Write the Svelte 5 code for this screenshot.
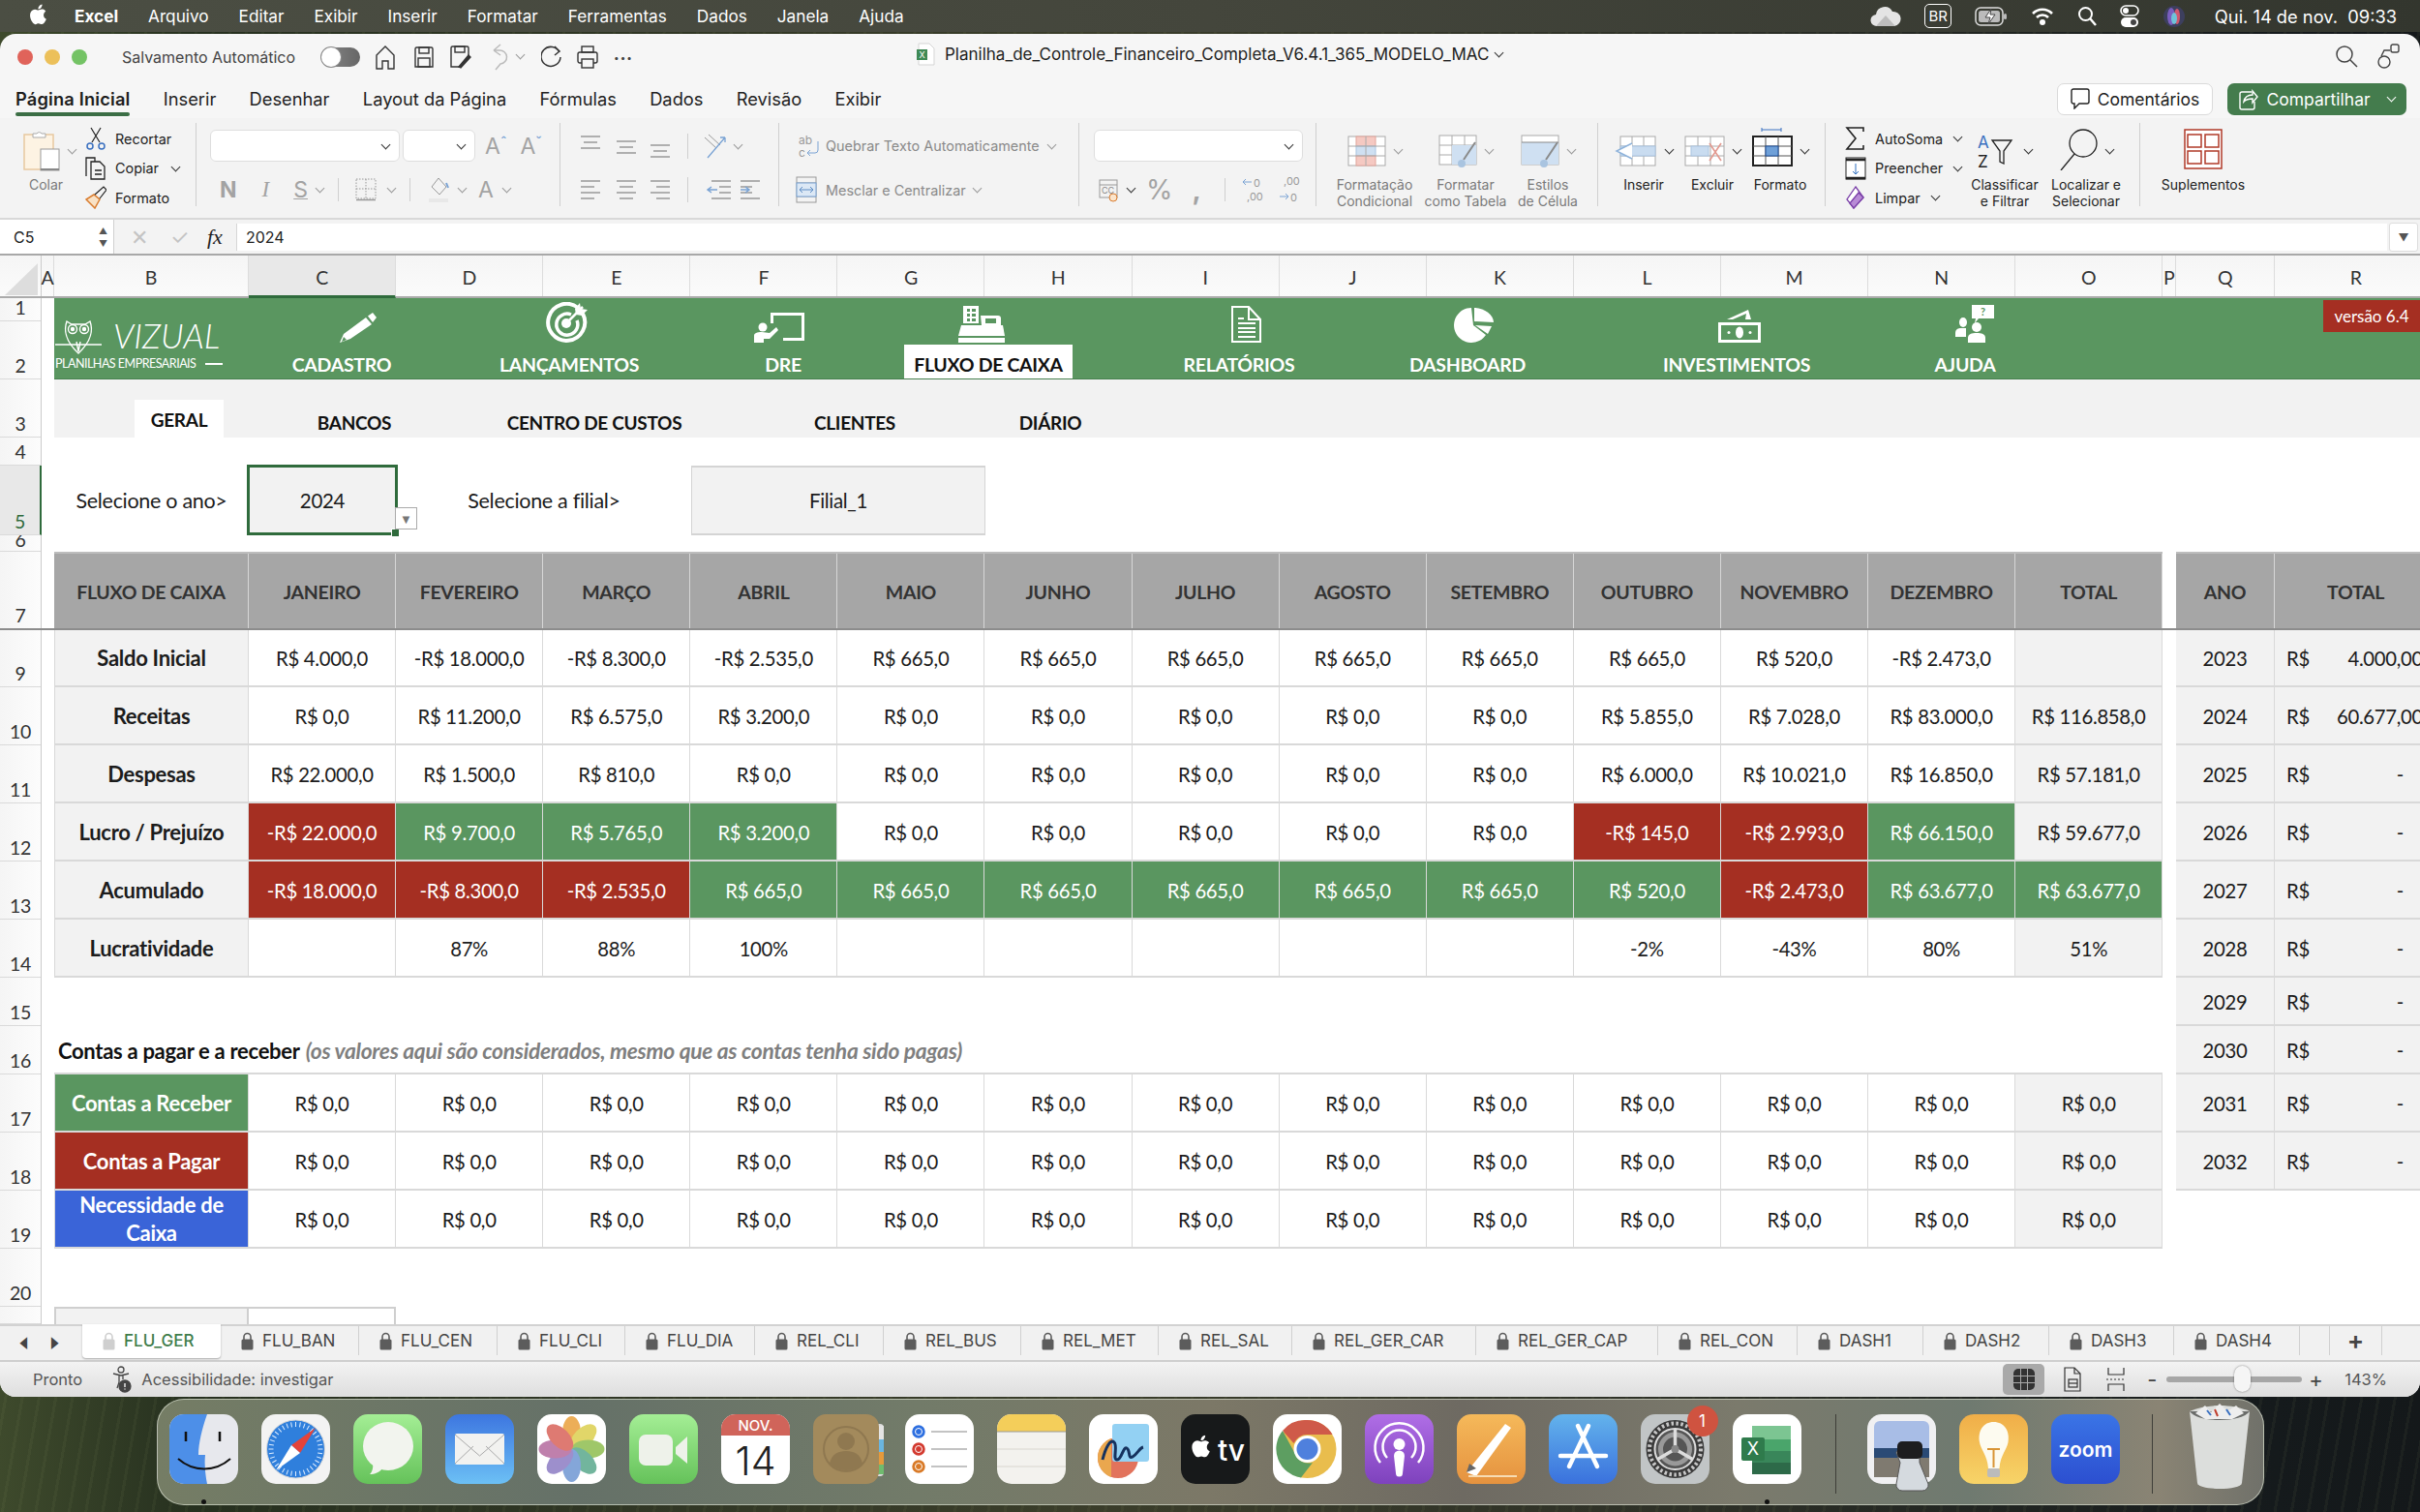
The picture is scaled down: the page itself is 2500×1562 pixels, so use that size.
<script>
  const menus = ['Arquivo', 'Editar', 'Exibir', 'Inserir', 'Formatar', 'Ferramentas', 'Dados', 'Janela', 'Ajuda']
  const ribbonTabs = ['Inserir', 'Desenhar', 'Layout da Página', 'Fórmulas', 'Dados', 'Revisão', 'Exibir']
  const letters = ['B', 'C', 'D', 'E', 'F', 'G', 'H', 'I', 'J', 'K', 'L', 'M', 'N', 'O', 'P', 'Q', 'R']
  const months = ['JANEIRO', 'FEVEREIRO', 'MARÇO', 'ABRIL', 'MAIO', 'JUNHO', 'JULHO', 'AGOSTO', 'SETEMBRO', 'OUTUBRO', 'NOVEMBRO', 'DEZEMBRO', 'TOTAL']

  const rowHeads = [
    ['1', 24], ['2', 60], ['3', 60], ['4', 29], ['5', 72], ['6', 17], ['7', 80],
    ['9', 60], ['10', 60], ['11', 60], ['12', 60], ['13', 60], ['14', 60],
    ['15', 50], ['16', 50], ['17', 60], ['18', 60], ['19', 60], ['20', 60], ['', 18],
  ]

  const zero = 'R$ 0,0'
  const five = [zero, zero, zero, zero, zero]
  const rows = [
    { label: 'Saldo Inicial', cells: ['R$ 4.000,0', '-R$ 18.000,0', '-R$ 8.300,0', '-R$ 2.535,0', 'R$ 665,0', 'R$ 665,0', 'R$ 665,0', 'R$ 665,0', 'R$ 665,0', 'R$ 665,0', 'R$ 520,0', '-R$ 2.473,0', ''] },
    { label: 'Receitas', cells: [zero, 'R$ 11.200,0', 'R$ 6.575,0', 'R$ 3.200,0', ...five, 'R$ 5.855,0', 'R$ 7.028,0', 'R$ 83.000,0', 'R$ 116.858,0'] },
    { label: 'Despesas', cells: ['R$ 22.000,0', 'R$ 1.500,0', 'R$ 810,0', zero, ...five, 'R$ 6.000,0', 'R$ 10.021,0', 'R$ 16.850,0', 'R$ 57.181,0'] },
    { label: 'Lucro / Prejuízo', tone: 'rgggnnnnnrrgn', cells: ['-R$ 22.000,0', 'R$ 9.700,0', 'R$ 5.765,0', 'R$ 3.200,0', ...five, '-R$ 145,0', '-R$ 2.993,0', 'R$ 66.150,0', 'R$ 59.677,0'] },
    { label: 'Acumulado', tone: 'rrrgggggggrgg', cells: ['-R$ 18.000,0', '-R$ 8.300,0', '-R$ 2.535,0', 'R$ 665,0', 'R$ 665,0', 'R$ 665,0', 'R$ 665,0', 'R$ 665,0', 'R$ 665,0', 'R$ 520,0', '-R$ 2.473,0', 'R$ 63.677,0', 'R$ 63.677,0'] },
    { label: 'Lucratividade', cells: ['', '87%', '88%', '100%', '', '', '', '', '', '-2%', '-43%', '80%', '51%'] },
  ]
  const zeros = Array(13).fill(zero)
  const payables = [
    { label: 'Contas a Receber', cls: 'bg-g' },
    { label: 'Contas a Pagar', cls: 'bg-r' },
    { label: 'Necessidade de Caixa', cls: 'bg-b' },
  ]
  const years = [
    ['2023', '4.000,00', 60], ['2024', '60.677,00', 60], ['2025', '-', 60], ['2026', '-', 60], ['2027', '-', 60],
    ['2028', '-', 60], ['2029', '-', 50], ['2030', '-', 50], ['2031', '-', 60], ['2032', '-', 60],
  ]
  const sheets = [
    ['FLU_GER', 143], ['FLU_BAN', 143], ['FLU_CEN', 143], ['FLU_CLI', 132], ['FLU_DIA', 134], ['REL_CLI', 133], ['REL_BUS', 142], ['REL_MET', 142],
    ['REL_SAL', 138], ['REL_GER_CAR', 190], ['REL_GER_CAP', 188], ['REL_CON', 144], ['DASH1', 130], ['DASH2', 130], ['DASH3', 129], ['DASH4', 130],
  ]
  const apple = 'M17.05 12.54c-.03-2.6 2.12-3.85 2.22-3.91-1.21-1.77-3.09-2.01-3.76-2.04-1.6-.16-3.12.94-3.93.94-.81 0-2.06-.92-3.39-.9-1.74.03-3.35 1.01-4.25 2.57-1.81 3.14-.46 7.8 1.3 10.35.86 1.25 1.89 2.65 3.24 2.6 1.3-.05 1.79-.84 3.36-.84 1.57 0 2.01.84 3.39.81 1.4-.02 2.28-1.27 3.14-2.53.99-1.45 1.4-2.85 1.42-2.93-.03-.01-2.72-1.04-2.74-4.12zM14.47 4.9c.72-.87 1.2-2.08 1.07-3.28-1.03.04-2.28.69-3.02 1.55-.66.77-1.24 2-1.09 3.18 1.15.09 2.32-.58 3.04-1.45z'
  const petals = [
    ['#e9a13b', 0], ['#dcd04f', 45], ['#8fbe4f', 90], ['#5aa98c', 135], ['#6f97d3', 180], ['#8c7cc4', 225], ['#b56a9e', 270], ['#d9635a', 315],
  ]
  const ticks = Array.from({ length: 36 }, (_, i) => i * 10)
</script>

{#snippet lock(color)}
  <svg class="lock" viewBox="0 0 13 20" style:fill={color} style:stroke={color}><path d="M3 9V6a3.5 3.5 0 0 1 7 0v3" fill="none" stroke-width="1.6" /><rect x="0.5" y="8.5" width="12" height="11" rx="1.6" stroke="none" /></svg>
{/snippet}

{#snippet xlfile(size)}
  <svg width={size} height={size} viewBox="0 0 20 24"><path d="M2 1h11l5 5v17H2z" fill="#fff" stroke="#d5d5d5" /><rect x="0" y="7" width="11" height="11" fill="#3f8a55" /><text x="5.5" y="15.6" font-size="9" text-anchor="middle" fill="#fff" font-family="Inter, sans-serif">X</text></svg>
{/snippet}

<div class="desktop">
  <header class="menubar">
    <svg class="apple" viewBox="0 0 24 24"><path d={apple} fill="#fff" /></svg>
    <b>Excel</b>
    {#each menus as m}<span>{m}</span>{/each}
    <div class="tray">
      <svg width="32" height="26" viewBox="0 0 32 26"><path d="M7 23a6 6 0 0 1-1-12 9 9 0 0 1 17-3 7.5 7.5 0 0 1 2 15z" fill="#e4e4e4" /><path d="M6 23l10-11 10 11z" fill="#bdbdbd" /></svg>
      <span class="br">BR</span>
      <svg width="34" height="20" viewBox="0 0 34 20"><rect x="1" y="1" width="28" height="18" rx="5" fill="none" stroke="#ddd" stroke-width="1.5" /><rect x="4" y="4" width="22" height="12" rx="2.5" fill="#bbb" /><rect x="30" y="7" width="3" height="6" rx="1.5" fill="#bbb" /><path d="M17 2l-6 9h5l-2 7 7-10h-5z" fill="#fff" stroke="#444" stroke-width="1" /></svg>
      <svg width="24" height="20" viewBox="0 0 24 20"><path d="M2 7a14 14 0 0 1 20 0M6 11a8.5 8.5 0 0 1 12 0" fill="none" stroke="#fff" stroke-width="2.6" /><circle cx="12" cy="16" r="3" fill="#fff" /></svg>
      <svg width="20" height="22" viewBox="0 0 20 22"><circle cx="8.5" cy="8.5" r="6.5" fill="none" stroke="#fff" stroke-width="2" /><path d="M13 13l6 7" stroke="#fff" stroke-width="2.4" /></svg>
      <svg width="20" height="24" viewBox="0 0 20 24"><rect x="1" y="1" width="18" height="10" rx="5" fill="none" stroke="#fff" stroke-width="1.6" /><circle cx="6" cy="6" r="3" fill="#fff" /><rect x="1" y="13" width="18" height="10" rx="5" fill="#fff" /><circle cx="14" cy="18" r="3" fill="#444" /></svg>
      <svg width="24" height="24" viewBox="0 0 24 24"><circle cx="12" cy="12" r="11" fill="#3d3f5e" /><ellipse cx="9" cy="12" rx="4" ry="9" fill="#7a5fc0" /><ellipse cx="15" cy="12" rx="3" ry="8" fill="#d0586e" /><ellipse cx="12" cy="14" rx="3" ry="6" fill="#6fc3d8" /></svg>
      <span class="date">Qui. 14 de nov.&nbsp; 09:33</span>
    </div>
  </header>

  <main class="window">
    <div class="titlebar">
      <i class="light red"></i><i class="light yel"></i><i class="light grn"></i>
      <span class="autosave">Salvamento Automático</span>
      <span class="toggle"><i></i></span>
      <svg class="tb" width="22" height="26" viewBox="0 0 22 26" fill="none" stroke="#333" stroke-width="1.4"><path d="M2 25V11l9-9 9 9v14h-6v-8H8v8z" /></svg>
      <svg class="tb" style="margin-left:4px" width="20" height="22" viewBox="0 0 20 22" fill="none" stroke="#333" stroke-width="1.4"><path d="M1 2.5A1.5 1.5 0 0 1 2.5 1h15A1.5 1.5 0 0 1 19 2.5V21H1z" /><rect x="5" y="1" width="10" height="6" /><rect x="4" y="12" width="12" height="9" /></svg>
      <svg class="tb" style="margin-left:2px" width="22" height="24" viewBox="0 0 22 24" fill="none" stroke="#333" stroke-width="1.4"><path d="M1 2.5A1.5 1.5 0 0 1 2.5 1h15A1.5 1.5 0 0 1 19 2.5V12l-8 10H1z" /><rect x="5" y="1" width="10" height="6" /><path d="M9 22l10-12 2 2-10 11z" fill="#333" /></svg>
      <svg class="tb" style="margin-left:1px" width="22" height="30" viewBox="0 0 22 30" fill="none" stroke="#bbb" stroke-width="1.5"><path d="M7 8l7-6M7 8l7 5M7 8h6a7 7 0 0 1 1 14l-5 6" /></svg>
      <i class="chev soft" style="margin:-4px 0 0 -6px"></i>
      <svg class="tb" style="margin-left:3px" width="22" height="24" viewBox="0 0 22 24" fill="none" stroke="#333" stroke-width="1.5"><path d="M19 7A10 10 0 1 0 20 12M14 1l5 5-5 4" /></svg>
      <svg class="tb" width="22" height="24" viewBox="0 0 22 24" fill="none" stroke="#333" stroke-width="1.4"><rect x="5" y="1" width="12" height="6" /><rect x="1" y="7" width="20" height="11" rx="2" /><rect x="5" y="14" width="12" height="9" fill="#f6f6f6" /></svg>
      <span class="more">•••</span>
      <div class="doctitle">
        {@render xlfile(24)}
        <span>Planilha_de_Controle_Financeiro_Completa_V6.4.1_365_MODELO_MAC</span>
        <i class="chev"></i>
      </div>
      <svg class="right-a" width="24" height="24" viewBox="0 0 24 24" fill="none" stroke="#444" stroke-width="1.5"><circle cx="10" cy="10" r="8" /><path d="M16 16l7 7" /></svg>
      <svg class="right-b" width="24" height="26" viewBox="0 0 24 26" fill="none" stroke="#444" stroke-width="1.4"><circle cx="7" cy="19" r="6" /><rect x="14" y="1" width="8" height="8" rx="2" /><path d="M4 13l3-6h6" /></svg>
    </div>

    <nav class="tabs">
      <span class="on">Página Inicial</span>
      {#each ribbonTabs as t}<span>{t}</span>{/each}
      <div class="actions">
        <button class="comments"><svg width="20" height="22" viewBox="0 0 20 22" fill="#fff" stroke="#222" stroke-width="1.4"><path d="M3 1h14a2 2 0 0 1 2 2v11a2 2 0 0 1-2 2H9l-5 5v-5H3a2 2 0 0 1-2-2V3a2 2 0 0 1 2-2z" /></svg>Comentários</button>
        <button class="share"><svg width="20" height="24" viewBox="0 0 20 24" fill="none" stroke="#fff" stroke-width="1.4"><path d="M13 5H3a2 2 0 0 0-2 2v14a2 2 0 0 0 2 2h11a2 2 0 0 0 2-2v-6" /><path d="M5 15c1-5 4-7 9-7V4l5 6-5 6v-4c-4 0-7 1-9 3z" /></svg>Compartilhar<i class="chev wh"></i></button>
      </div>
    </nav>

    <section class="ribbon">
      <div class="grp g1">
        <div class="big colar">
          <div class="ico">
            <svg width="38" height="42" viewBox="0 0 38 42"><rect x="1" y="4" width="30" height="36" fill="#fdf3e3" stroke="#e8c9a0" stroke-width="1.5" /><path d="M10 7V3h4a3 3 0 0 1 5 0h4v4z" fill="#fff" stroke="#aaa" /><rect x="18" y="19" width="19" height="22" fill="#fff" stroke="#999" /><path d="M18 40h19" stroke="#888" stroke-width="2" /></svg>
            <i class="chev soft"></i>
          </div>
          <span class="lbl grey">Colar</span>
        </div>
        <div class="stack">
          <div class="it"><svg width="22" height="24" viewBox="0 0 22 24" fill="none" stroke="#222" stroke-width="1.2"><path d="M6 1l9 15M16 1L7 16" /><circle cx="5" cy="20" r="3" stroke="#3a70c0" stroke-width="1.5" /><circle cx="17" cy="20" r="3" stroke="#3a70c0" stroke-width="1.5" /></svg>Recortar</div>
          <div class="it"><svg width="22" height="24" viewBox="0 0 22 24" fill="#f3f3f3" stroke="#222" stroke-width="1.3"><path d="M1 20V1h9v4" /><path d="M6 5h9l5 5v13H6z" /><path d="M10 14h7M10 18h7" /></svg>Copiar<i class="chev" style="margin-left:5px"></i></div>
          <div class="it"><svg width="22" height="24" viewBox="0 0 22 24" fill="none" stroke="#d97c2e" stroke-width="1.5"><path d="M1 14l9 9 5-9-6-5z" fill="#f9e2c6" /><path d="M10 9l9-8 3 3-7 9" stroke="#222" stroke-width="1.2" /></svg>Formato</div>
        </div>
      </div>

      <div class="grp g2">
        <div class="line">
          <div class="box" style="width:196px"><i class="chev"></i></div>
          <div class="box" style="width:75px;margin-left:3px"><i class="chev"></i></div>
          <span class="gl a1">A<small>ˆ</small></span>
          <span class="gl a2">A<small>ˇ</small></span>
        </div>
        <div class="line low">
          <b class="gl" style="margin-left:10px">N</b>
          <i class="gl serif" style="margin-left:26px">I</i>
          <u class="gl" style="margin-left:25px">S</u>
          <i class="chev soft" style="margin-left:9px"></i>
          <i class="vsep" style="margin-left:15px"></i>
          <svg style="margin-left:17px" width="22" height="24" viewBox="0 0 22 24" fill="none" stroke="#999"><rect x="1" y="1" width="20" height="20" stroke-dasharray="1.5 1.5" /><path d="M11 1v20M1 11h20" stroke-dasharray="1.5 1.5" /><path d="M1 22.5h20" stroke-width="1.5" /></svg>
          <i class="chev soft" style="margin-left:12px"></i>
          <i class="vsep" style="margin-left:15px"></i>
          <svg style="margin-left:19px" width="22" height="26" viewBox="0 0 22 26" fill="none" stroke="#999"><path d="M10 1l8 9-7 8-8-8z" /><path d="M18 6l2 5" stroke="#7aa3d4" stroke-width="2" /><rect y="22" width="20" height="4" fill="#e8e8e8" stroke="none" /></svg>
          <i class="chev soft" style="margin-left:9px"></i>
          <span class="gl u-bar" style="margin-left:13px">A</span>
          <i class="chev soft" style="margin-left:10px"></i>
        </div>
      </div>

      <div class="grp g3">
        <div class="line">
          <svg class="al" width="92" height="24" viewBox="0 0 92 24" stroke="#999" stroke-width="1.6"><path d="M0 2h20M3 8h14M0 14h20M37 7h20M40 13h14M37 19h20M72 11h20M75 17h14M72 23h20" /></svg>
          <i class="vsep tall" style="margin-left:18px"></i>
          <svg style="margin-left:16px" width="24" height="26" viewBox="0 0 24 26" fill="none" stroke="#999"><path d="M1 4l12 11M5 1l12 11" /><path d="M4 25L22 4M22 4h-5M22 4v5" stroke="#7aa3d4" stroke-width="1.3" /></svg>
          <i class="chev soft" style="margin-left:8px"></i>
        </div>
        <div class="line low">
          <svg class="al" width="92" height="22" viewBox="0 0 92 22" stroke="#999" stroke-width="1.6"><path d="M0 2h20M0 8h14M0 14h20M0 20h14M37 2h20M40 8h14M37 14h20M40 20h14M72 2h20M78 8h14M72 14h20M78 20h14" /></svg>
          <i class="vsep tall" style="margin-left:18px"></i>
          <svg style="margin-left:18px" width="58" height="22" viewBox="0 0 58 22" fill="none" stroke="#999" stroke-width="1.5"><path d="M6 2h20M14 8h12M14 14h12M6 20h20M36 2h20M36 8h12M36 14h12M36 20h20" /><path d="M12 11H2M6 8l-4 3 4 3M36 11h8M41 8l4 3-4 3" stroke="#7aa3d4" /></svg>
        </div>
      </div>

      <div class="grp g4">
        <div class="line">
          <svg style="margin-left:20px" width="22" height="26" viewBox="0 0 22 26" fill="none" stroke="#999"><text x="0" y="11" font-size="12" fill="#999" stroke="none" font-family="Inter, sans-serif">ab</text><text x="0" y="24" font-size="12" fill="#999" stroke="none" font-family="Inter, sans-serif">c</text><path d="M20 8v9a3 3 0 0 1-3 3h-7M12 17l-3 3 3 3" stroke="#7aa3d4" /></svg>
          <span class="dim" style="margin-left:6px">Quebrar Texto Automaticamente</span>
          <i class="chev soft" style="margin-left:9px"></i>
        </div>
        <div class="line low">
          <svg style="margin-left:17px" width="22" height="28" viewBox="0 0 22 28" fill="none" stroke="#999"><rect x="1" y="1" width="20" height="26" /><path d="M1 7h20M1 21h20" /><rect x="1" y="7" width="20" height="14" fill="#dce8f5" stroke="#7aa3d4" /><path d="M4 14h14M4 14l3-3M4 14l3 3M18 14l-3-3M18 14l-3 3" stroke="#5d8cc4" /></svg>
          <span class="dim" style="margin-left:9px">Mesclar e Centralizar</span>
          <i class="chev soft" style="margin-left:8px"></i>
        </div>
      </div>

      <div class="grp g5">
        <div class="line">
          <div class="box" style="width:216px;margin-left:15px"><i class="chev"></i></div>
        </div>
        <div class="line low">
          <svg style="margin-left:20px" width="22" height="26" viewBox="0 0 22 26" fill="none" stroke="#999"><rect x="1" y="3" width="18" height="18" /><path d="M1 8h18" /><text x="3" y="17" font-size="9" fill="#888" stroke="none" font-family="Inter, sans-serif">CC</text><circle cx="15" cy="21" r="4" fill="#fbe5cc" stroke="#d97c2e" /></svg>
          <i class="chev" style="margin-left:8px"></i>
          <span class="gl pct" style="margin-left:12px">%</span>
          <span class="gl pct" style="margin-left:20px;font-weight:700">,</span>
          <i class="vsep" style="margin-left:24px"></i>
          <svg style="margin-left:17px" width="22" height="32" viewBox="0 0 22 32" fill="none" stroke="#7aa3d4"><path d="M10 8H1M4 5L1 8l3 3" /><text x="12" y="13" font-size="11" fill="#999" stroke="none" font-family="Inter, sans-serif">0</text><text x="5" y="27" font-size="11" fill="#999" stroke="none" font-family="Inter, sans-serif">,00</text></svg>
          <svg style="margin-left:16px" width="22" height="32" viewBox="0 0 22 32" fill="none" stroke="#7aa3d4"><text x="5" y="11" font-size="11" fill="#999" stroke="none" font-family="Inter, sans-serif">,00</text><path d="M1 23h9M7 20l3 3-3 3" /><text x="12" y="28" font-size="11" fill="#999" stroke="none" font-family="Inter, sans-serif">0</text></svg>
        </div>
      </div>

      <div class="grp g6">
        <div class="big" style="width:84px;margin-left:18px">
          <div class="ico"><svg width="40" height="32" viewBox="0 0 40 32" fill="#fff" stroke="#aaa"><rect x="1" y="1" width="38" height="30" /><rect x="9" y="1" width="20" height="10" fill="#f5c9c2" stroke="#e0a59c" /><rect x="9" y="11" width="20" height="10" fill="#cfe0f2" stroke="#a9c4e0" /><rect x="9" y="21" width="20" height="10" fill="#f5c9c2" stroke="#e0a59c" /><path d="M19 1v30M1 11h38M1 21h38" /></svg><i class="chev soft"></i></div>
          <span class="lbl grey">Formatação<br />Condicional</span>
        </div>
        <div class="big" style="width:104px">
          <div class="ico"><svg width="40" height="34" viewBox="0 0 40 34" fill="#fff" stroke="#aaa"><rect x="1" y="1" width="38" height="30" /><path d="M14 1v30M27 1v30M1 11h38M1 21h38" /><rect x="14" y="11" width="25" height="20" fill="#cfe0f2" stroke="none" /><path d="M38 8L26 26" stroke="#8a8a8a" stroke-width="2" /><ellipse cx="24" cy="30" rx="4" ry="4" fill="#a9c4e0" stroke="none" /></svg><i class="chev soft"></i></div>
          <span class="lbl grey">Formatar<br />como Tabela</span>
        </div>
        <div class="big" style="width:66px">
          <div class="ico"><svg width="40" height="34" viewBox="0 0 40 34" fill="#fff" stroke="#aaa"><rect x="1" y="1" width="38" height="30" /><rect x="1" y="8" width="38" height="23" fill="#cfe0f2" stroke="none" /><path d="M1 8h38" stroke="#888" /><path d="M38 8L26 26" stroke="#8a8a8a" stroke-width="2" /><ellipse cx="24" cy="30" rx="4" ry="4" fill="#a9c4e0" stroke="none" /></svg><i class="chev soft"></i></div>
          <span class="lbl grey">Estilos<br />de Célula</span>
        </div>
      </div>

      <div class="grp g7">
        <div class="big" style="width:72px;margin-left:11px">
          <div class="ico"><svg width="44" height="32" viewBox="0 0 44 32" fill="#fff" stroke="#aaa"><rect x="6" y="1" width="36" height="30" /><path d="M18 1v30M30 1v30M6 11h36M6 21h36" /><rect x="6" y="11" width="36" height="10" fill="#c9dcf0" stroke="#a9c4e0" /><path d="M18 8L2 16l16 8" fill="#fff" stroke="#8fb3da" stroke-width="1.5" /></svg><i class="chev"></i></div>
          <span class="lbl">Inserir</span>
        </div>
        <div class="big" style="width:70px">
          <div class="ico"><svg width="42" height="32" viewBox="0 0 42 32" fill="#fff" stroke="#aaa"><rect x="1" y="1" width="40" height="30" /><path d="M14 1v30M27 1v30M1 11h40M1 21h40" /><rect x="7" y="11" width="18" height="10" fill="#c9dcf0" stroke="#a9c4e0" /><path d="M26 8l12 18M38 8L26 26" stroke="#e39a90" stroke-width="1.6" /></svg><i class="chev"></i></div>
          <span class="lbl">Excluir</span>
        </div>
        <div class="big" style="width:70px">
          <div class="ico"><svg width="42" height="40" viewBox="0 0 42 40" fill="#fff" stroke="#222" style="margin-top:-8px"><path d="M10 2h20M10 0v4M30 0v4" stroke="#3a70c0" /><rect x="1" y="9" width="40" height="30" stroke-width="2" /><path d="M14 9v30M27 9v30M1 19h40M1 29h40" stroke="#555" /><rect x="14" y="19" width="13" height="10" fill="#6fa0d8" stroke="#1f4f9a" /></svg><i class="chev"></i></div>
          <span class="lbl">Formato</span>
        </div>
      </div>

      <div class="grp g8">
        <div class="stack w">
          <div class="it"><svg width="22" height="24" viewBox="0 0 22 24" fill="none" stroke="#222" stroke-width="1.6"><path d="M19 5V1H2l9 11-9 11h17v-4" /></svg>AutoSoma<i class="chev" style="margin-left:3px"></i></div>
          <div class="it"><svg width="22" height="24" viewBox="0 0 22 24" fill="#fff" stroke="#222"><rect x="1" y="1" width="20" height="22" /><path d="M1 3h20M1 22h20" stroke-width="2.5" /><path d="M11 7v11M8 15l3 3 3-3" stroke="#2f6fbf" fill="none" /></svg>Preencher<i class="chev" style="margin-left:3px"></i></div>
          <div class="it"><svg width="22" height="24" viewBox="0 0 22 24" fill="#fff" stroke="#7a3fa8" stroke-width="1.3"><path d="M11 1l8 11-10 11-7-9z" /><path d="M5 18l9-11 5 5-10 11z" fill="#b88bd6" /></svg>Limpar<i class="chev" style="margin-left:3px"></i></div>
        </div>
        <div class="big" style="width:80px;margin-left:7px">
          <div class="ico"><svg width="40" height="38" viewBox="0 0 40 38" fill="none" stroke="#222"><text x="0" y="16" font-size="17" fill="#3a70c0" stroke="none" font-family="Inter, sans-serif">A</text><text x="0" y="36" font-size="17" fill="#222" stroke="none" font-family="Inter, sans-serif">Z</text><path d="M15 8h20l-8 11v13l-4-2V19z" stroke-width="1.3" /></svg><i class="chev"></i></div>
          <span class="lbl">Classificar<br />e Filtrar</span>
        </div>
        <div class="big" style="width:88px">
          <div class="ico"><svg width="40" height="44" viewBox="0 0 40 44" fill="none" stroke="#222" stroke-width="1.3" style="margin-top:-4px"><circle cx="25" cy="16" r="14" /><path d="M16 27L2 44" /></svg><i class="chev"></i></div>
          <span class="lbl">Localizar e<br />Selecionar</span>
        </div>
      </div>

      <div class="grp g9">
        <div class="big" style="width:130px">
          <div class="ico"><svg width="40" height="42" viewBox="0 0 40 42" fill="#fff" stroke="#b03a28" stroke-width="1.5" style="margin-top:-3px"><rect x="1" y="1" width="38" height="40" /><rect x="4" y="6" width="14" height="13" /><rect x="22" y="6" width="14" height="13" /><rect x="4" y="23" width="14" height="13" /><rect x="22" y="23" width="14" height="13" /></svg></div>
          <span class="lbl">Suplementos</span>
        </div>
      </div>
    </section>

    <div class="formula">
      <div class="namebox"><span>C5</span><em>▲<br />▼</em></div>
      <span class="fx x">✕</span><span class="fx c">✓</span><span class="fx f">fx</span>
      <div class="input">2024</div>
      <div class="expand">▼</div>
    </div>

    <section class="sheet">
      <div class="colhead">
        <div class="corner"><svg width="36" height="36" viewBox="0 0 36 36"><path d="M36 2v33H2z" fill="#ddd" /></svg></div>
        <div class="ch">A</div>
        {#each letters as l}<div class="ch" class:sel={l === 'C'}>{l}</div>{/each}
      </div>
      <div class="sheetbody">
        <div class="rowheads">
          {#each rowHeads as [n, h]}
            <div class="rh" class:sel={n === '5'} class:short={n === '6'} style:height="{h}px">{n}</div>
          {/each}
        </div>

        <div class="content">
          <div class="banner">
            <div class="logo">
              <div class="logo-top">
                <svg width="48" height="38" viewBox="0 0 48 38" fill="none" stroke="#fff" stroke-width="1.4"><path d="M12 3l5 3h14l5-3c3 8 2 20-12 33C10 23 9 11 12 3z" /><circle cx="18" cy="11" r="4.5" /><circle cx="30" cy="11" r="4.5" /><circle cx="18" cy="11" r="1.5" fill="#fff" /><circle cx="30" cy="11" r="1.5" fill="#fff" /><path d="M22 24l2 10 2-10M0 27h48" /></svg>
                <span class="vizual">VIZUAL</span>
              </div>
              <div class="logo-sub"><span>PLANILHAS EMPRESARIAIS</span><i></i></div>
            </div>

            <div class="nav" style="--dx:17px">
              <svg width="38" height="31" viewBox="0 0 38 31" fill="#fff"><path d="M0 31l4-9L27 5l6 7-22 15z" /><path d="M29 3.500l5-3.500 4 5-4 5z" /><path d="M2 30l2-5 3 3z" fill="#5a9660" /></svg>
              <span>CADASTRO</span>
            </div>
            <div class="nav" style="--dx:-2px">
              <svg width="44" height="42" viewBox="0 0 44 42" fill="none" stroke="#fff"><path d="M33 6A19 19 0 1 0 38 12" stroke-width="4" /><path d="M26 13a11 11 0 1 0 6 6" stroke-width="3.500" /><circle cx="21" cy="22" r="5" fill="#fff" stroke="none" /><path d="M21 22L38 5" stroke-width="2.500" /><path d="M35 1l1 6 7 1-6 6-6-1-1-6z" fill="#fff" stroke="none" /></svg>
              <span>LANÇAMENTOS</span>
            </div>
            <div class="nav" style="--dx:-3px">
              <svg width="54" height="32" viewBox="0 0 54 32" fill="#fff"><path d="M17 1h35v29H30v-3h19V4H20v8h-3z" /><circle cx="9" cy="16" r="4.500" /><path d="M0 32v-7c0-3 3-4 8-4l8 1 7-6 2 3-9 9H10v4z" /></svg>
              <span>DRE</span>
            </div>
            <div class="nav active" style="--dx:-7px">
              <svg width="48" height="38" viewBox="0 0 48 38" fill="#fff"><path d="M5 0h16v18H5z" /><path d="M9 3h3v3H9zM14 3h4v3h-4zM9 8h3v3H9zM14 8h4v3h-4zM9 13h3v3H9zM14 13h4v3h-4z" fill="#5a9660" /><path d="M23 10h18a3 3 0 0 1 3 3v7h-20z" /><rect x="28" y="13" width="11" height="5" fill="#5a9660" /><path d="M3 20h43l2 11H0z" /><rect y="33" width="48" height="5" /></svg>
              <span>FLUXO DE CAIXA</span>
            </div>
            <div class="nav" style="--dx:7px">
              <svg width="32" height="38" viewBox="0 0 32 38" fill="none" stroke="#fff" stroke-width="2"><path d="M2 1h17l12 13v23H2z" /><path d="M19 1v13h12" /><path d="M8 13h6M8 18h18M8 23h18M8 27h18M8 32h18" /></svg>
              <span>RELATÓRIOS</span>
            </div>
            <div class="nav" style="--dx:5px">
              <svg width="44" height="36" viewBox="0 0 44 36" fill="#fff"><path d="M21 0A18 18 0 1 0 36 28L23 18z" /><path d="M24 0v14l20 1C44 7 34 0 24 0z" /><path d="M25 18l17 1-4 8z" /></svg>
              <span>DASHBOARD</span>
            </div>
            <div class="nav" style="--dx:3px">
              <svg width="46" height="34" viewBox="0 0 46 34" fill="#fff"><path d="M10 10l22-10 3 10z" /><path d="M16 10l14-6-1 6z" fill="#5a9660" /><path d="M1 13h44v21H1z" /><path d="M4 16h38v15H4z" fill="#5a9660" /><ellipse cx="23" cy="23.500" rx="4" ry="6" fill="#fff" /><circle cx="12" cy="23.500" r="1.500" fill="#fff" /><circle cx="34" cy="23.500" r="1.500" fill="#fff" /></svg>
              <span>INVESTIMENTOS</span>
            </div>
            <div class="nav" style="--dx:10px">
              <svg width="40" height="39" viewBox="0 0 40 39" fill="#fff"><path d="M17 0h23v14H24l-4 5 1-5h-4z" /><text x="28.500" y="11" font-size="11" text-anchor="middle" fill="#5a9660" font-family="Lato, sans-serif" font-weight="700">?</text><ellipse cx="8" cy="18" rx="4" ry="5" /><path d="M0 33v-4c0-4 3-5 6-5h5v9z" /><circle cx="22" cy="23" r="5" /><path d="M13 39v-5c0-4 4-5 9-5s9 1 9 5v5z" /></svg>
              <span>AJUDA</span>
            </div>
            <div class="versao">versão 6.4</div>
          </div>

          <div class="subtabs">
            <span class="on">GERAL</span>
            <span style="--cx:366px">BANCOS</span>
            <span style="--cx:614px">CENTRO DE CUSTOS</span>
            <span style="--cx:883px">CLIENTES</span>
            <span style="--cx:1085px">DIÁRIO</span>
          </div>

          <div class="picker">
            <div class="p-lbl">Selecione o ano&gt;</div>
            <div class="p-val selected">
              2024
              <i class="handle"></i>
              <span class="drop">▼</span>
            </div>
            <div class="p-lbl">Selecione a filial&gt;</div>
            <div class="p-val filial">Filial_1</div>
          </div>

          <div class="tables">
            <div class="main">
              <div class="grid hdr">
                <div>FLUXO DE CAIXA</div>
                {#each months as m}<div>{m}</div>{/each}
              </div>
              {#each rows as r}
                <div class="grid body">
                  <div class="name">{r.label}</div>
                  {#each r.cells as c, i}
                    <div class:total={i === 12} class:bg-r={r.tone?.[i] === 'r'} class:bg-g={r.tone?.[i] === 'g'}>{c}</div>
                  {/each}
                </div>
              {/each}

              <div class="note"><b>Contas a pagar e a receber</b> <em>(os valores aqui são considerados, mesmo que as contas tenha sido pagas)</em></div>

              <div class="payables">
                {#each payables as p}
                  <div class="grid body">
                    <div class="name {p.cls}">{p.label}</div>
                    {#each zeros as c, i}<div class:total={i === 12}>{c}</div>{/each}
                  </div>
                {/each}
              </div>

              <div class="cutoff"><div>Mensal</div><div>Total</div></div>
            </div>

            <div class="side">
              <div class="yr hdr"><div>ANO</div><div>TOTAL</div></div>
              {#each years as [y, v, h]}
                <div class="yr body" style:height="{h}px">
                  <div>{y}</div>
                  <div class="acc"><span>R$</span><span class:dash={v === '-'}>{v}</span></div>
                </div>
              {/each}
            </div>
          </div>

          <i class="freeze"></i>
        </div>
      </div>
    </section>

    <div class="sheettabs">
      <span class="arrow">◀</span><span class="arrow">▶</span>
      {#each sheets as [name, w], i}
        <div class="stab" class:on={i === 0} style:width="{w}px">
          {@render lock(i === 0 ? '#cfcfcf' : '#5c5c5c')}
          <span>{name}</span>
        </div>
      {/each}
      <div class="plus">+</div>
    </div>

    <footer class="status">
      <span>Pronto</span>
      <svg style="margin-left:31px" width="20" height="28" viewBox="0 0 20 28" fill="none" stroke="#444" stroke-width="1.3"><circle cx="9" cy="4" r="3" /><path d="M1 8l8 2 8-2M7 10v7l-2 6M11 10v4" /><circle cx="13" cy="21" r="6" fill="#444" /><path d="M13 18v4M13 23.500v1" stroke="#fff" /></svg>
      <span style="margin-left:10px">Acessibilidade: investigar</span>
      <div class="zoomctl">
        <span class="view"><svg width="24" height="24" viewBox="0 0 24 24"><rect x="1" y="1" width="22" height="22" rx="5" fill="#333" /><path d="M8.500 1v22M15.500 1v22M1 8.500h22M1 15.500h22" stroke="#a9a9a9" /></svg></span>
        <svg style="margin-left:20px" width="18" height="26" viewBox="0 0 18 26" fill="none" stroke="#333" stroke-width="1.2"><path d="M1 1h10l6 6v18H1z" /><path d="M11 1v6h6" /><rect x="5" y="13" width="9" height="8" /><path d="M5 17h9" /></svg>
        <svg style="margin-left:26px" width="20" height="26" viewBox="0 0 20 26" fill="none" stroke="#333" stroke-width="1.2"><path d="M2 1v7h16V1M2 25v-7h16v7" /><path d="M0 13h20" stroke-dasharray="2 2" /></svg>
        <span class="pm" style="margin-left:20px">-</span>
        <div class="slider"><i></i></div>
        <span class="pm">+</span>
        <span class="pct-z">143%</span>
      </div>
    </footer>
  </main>

  <div class="dockrow">
    <div class="dock">
      <!-- finder -->
      <div class="di">
        <svg viewBox="0 0 71 72"><defs><clipPath id="sq"><rect width="71" height="72" rx="15" /></clipPath></defs><g clip-path="url(#sq)"><rect width="71" height="72" fill="#e7e8ed" /><path d="M0 0h39c-5 14-9 30-9 42h7c-1 10 0 20 2 30H0z" fill="#4d8fe8" /><path d="M17 18v10M52 18v10" stroke="#111" stroke-width="2.500" /><path d="M9 46c16 14 38 14 54 0" fill="none" stroke="#111" stroke-width="2" /></g></svg>
        <i class="dot"></i>
      </div>
      <!-- safari -->
      <div class="di">
        <svg viewBox="0 0 71 72"><rect width="71" height="72" rx="15" fill="#f3f3f3" /><circle cx="35.500" cy="36" r="30" fill="#2f7fdc" stroke="#d8d8d8" /><g stroke="#dfeeff" stroke-width="1">{#each ticks as t}<path d="M35.500 8v5" transform="rotate({t} 35.500 36)" />{/each}</g><path d="M56 14L31 32l9 8z" fill="#e4433a" /><path d="M15 58l16-26 9 8z" fill="#fff" /></svg>
      </div>
      <!-- messages -->
      <div class="di">
        <svg viewBox="0 0 71 72"><defs><linearGradient id="gg" x1="0" y1="0" x2="0" y2="1"><stop offset="0" stop-color="#a4ee95" /><stop offset="1" stop-color="#65c25a" /></linearGradient></defs><rect width="71" height="72" rx="15" fill="url(#gg)" /><ellipse cx="36" cy="33" rx="26" ry="25" fill="#f2f4ee" /><path d="M20 50c1 6-1 10-3 12 5 0 10-2 13-6z" fill="#f2f4ee" /></svg>
      </div>
      <!-- mail -->
      <div class="di">
        <svg viewBox="0 0 71 72"><defs><linearGradient id="mb" x1="0" y1="0" x2="0" y2="1"><stop offset="0" stop-color="#3d76e0" /><stop offset="1" stop-color="#6cc0f5" /></linearGradient></defs><rect width="71" height="72" rx="15" fill="url(#mb)" /><rect x="10" y="20" width="51" height="32" rx="2" fill="#f2f2f0" /><path d="M10 21l25.500 22L61 21M10 51l19-18M61 51L42 33" fill="none" stroke="#aaa" /></svg>
      </div>
      <!-- photos -->
      <div class="di">
        <svg viewBox="0 0 71 72"><rect width="71" height="72" rx="15" fill="#fff" /><g opacity="0.85">{#each petals as [c, a]}<ellipse cx="35.500" cy="19" rx="9.500" ry="17" fill={c} transform="rotate({a} 35.500 36)" />{/each}</g></svg>
      </div>
      <!-- facetime -->
      <div class="di">
        <svg viewBox="0 0 71 72"><rect width="71" height="72" rx="15" fill="url(#gg)" /><rect x="10" y="21" width="35" height="32" rx="7" fill="#eef2ea" /><path d="M48 34l12-11v28L48 41z" fill="#eef2ea" /></svg>
      </div>
      <!-- calendar -->
      <div class="di">
        <svg viewBox="0 0 71 72"><rect width="71" height="72" rx="15" fill="#fff" /><path d="M0 22V15A15 15 0 0 1 15 0h41a15 15 0 0 1 15 15v7z" fill="#d0645a" /><text x="35.500" y="17" font-size="15" font-weight="500" fill="#fff" text-anchor="middle" font-family="Inter, sans-serif">NOV.</text><text x="35.500" y="63" font-size="41" font-weight="300" fill="#222" text-anchor="middle" font-family="Inter, sans-serif">14</text></svg>
      </div>
      <!-- contacts -->
      <div class="di wide">
        <svg viewBox="0 0 73 72"><rect x="62" y="10" width="11" height="54" rx="4" fill="#ddd" /><rect x="65" y="12" width="8" height="14" fill="#e4e4e4" /><rect x="65" y="26" width="8" height="13" fill="#6ab5e0" /><rect x="65" y="39" width="8" height="13" fill="#e59a3c" /><rect x="65" y="52" width="8" height="10" fill="#6fbb6e" /><rect width="68" height="72" rx="13" fill="#a38a5c" /><circle cx="34" cy="36" r="23" fill="none" stroke="#8f7850" stroke-width="2" /><circle cx="34" cy="28" r="9" fill="#8f7850" /><path d="M17 51c2-10 9-13 17-13s15 3 17 13a24 24 0 0 1-34 0z" fill="#8f7850" /></svg>
      </div>
      <!-- reminders -->
      <div class="di">
        <svg viewBox="0 0 71 72"><rect width="71" height="72" rx="15" fill="#fff" /><g fill="none" stroke-width="1.500"><circle cx="14" cy="18" r="6" fill="#2d6fe0" stroke="#2d6fe0" /><circle cx="14" cy="36" r="6" fill="#d33a2f" stroke="#d33a2f" /><circle cx="14" cy="54" r="6" fill="#d97a27" stroke="#d97a27" /></g><g stroke="#888" stroke-width="1.200"><path d="M27 18h37M27 36h37M27 54h37" /></g><g fill="none" stroke="#fff"><circle cx="14" cy="18" r="3.500" /><circle cx="14" cy="36" r="3.500" /><circle cx="14" cy="54" r="3.500" /></g></svg>
      </div>
      <!-- notes -->
      <div class="di">
        <svg viewBox="0 0 71 72"><rect width="71" height="72" rx="15" fill="#f3f2ee" /><path d="M0 18V15A15 15 0 0 1 15 0h41a15 15 0 0 1 15 15v3z" fill="#f4ce5a" /><path d="M0 18h71" stroke="#999" /><path d="M0 36h71M0 54h71" stroke="#d8d6cf" /></svg>
      </div>
      <!-- freeform -->
      <div class="di">
        <svg viewBox="0 0 71 72"><rect width="71" height="72" rx="15" fill="#fff" /><circle cx="30" cy="45" r="21" fill="#e2735c" /><path d="M9 45a21 21 0 0 1 14-20v40A21 21 0 0 1 9 45z" fill="#eaa74e" /><rect x="24" y="10" width="38" height="39" rx="3" fill="#93d1f3" /><path d="M14 47c3-12 8-22 12-18s-2 18 3 18 6-14 10-12 1 12 6 9 7-9 11-10" fill="none" stroke="#15325e" stroke-width="3" /></svg>
      </div>
      <!-- tv -->
      <div class="di">
        <svg viewBox="0 0 71 72"><rect width="71" height="72" rx="15" fill="#17191a" /><g transform="translate(8 20) scale(1.100)"><path d={apple} fill="#fff" /></g><text x="52" y="48" font-size="30" fill="#fff" text-anchor="middle" font-family="Inter, sans-serif" font-weight="500">tv</text></svg>
      </div>
      <!-- chrome -->
      <div class="di">
        <svg viewBox="0 0 71 72"><rect width="71" height="72" rx="15" fill="#fff" /><circle cx="35.500" cy="36" r="30" fill="#e9bd4d" /><path d="M35.500 6a30 30 0 0 1 26 15H35.500a15 15 0 0 0-14 9L10 17a30 30 0 0 1 25.500-11z" fill="#cf5a49" /><path d="M10 17l13 24a15 15 0 0 0 18 9L29 65.500A30 30 0 0 1 10 17z" fill="#5d9e61" /><circle cx="35.500" cy="36" r="14" fill="#fff" /><circle cx="35.500" cy="36" r="11" fill="#4f80dd" /></svg>
      </div>
      <!-- podcasts -->
      <div class="di">
        <svg viewBox="0 0 71 72"><defs><linearGradient id="pd" x1="0" y1="0" x2="0" y2="1"><stop offset="0" stop-color="#b06ee6" /><stop offset="1" stop-color="#7e42bd" /></linearGradient></defs><rect width="71" height="72" rx="15" fill="url(#pd)" /><g fill="none" stroke="#fff" stroke-width="2.500"><path d="M16 50a25 25 0 1 1 39 0" /><path d="M23 45a17 17 0 1 1 25 0" /></g><circle cx="35.500" cy="31" r="6" fill="#fff" /><path d="M30 43a5.500 5.500 0 0 1 11 0l-2 18a3.500 3.500 0 0 1-7 0z" fill="#fff" /></svg>
      </div>
      <!-- pages -->
      <div class="di">
        <svg viewBox="0 0 71 72"><defs><linearGradient id="pg" x1="0" y1="0" x2="0" y2="1"><stop offset="0" stop-color="#f5b95a" /><stop offset="1" stop-color="#e5923f" /></linearGradient></defs><rect width="71" height="72" rx="15" fill="url(#pg)" /><path d="M10 60L50 10l6 4-36 50z" fill="#fff" /><path d="M10 60l3-9 7 5z" fill="#666" /><path d="M12 64h50" stroke="#f7dcb3" stroke-width="2" /></svg>
      </div>
      <!-- app store -->
      <div class="di">
        <svg viewBox="0 0 71 72"><defs><linearGradient id="as" x1="0" y1="0" x2="0" y2="1"><stop offset="0" stop-color="#63b3ec" /><stop offset="1" stop-color="#3a71dd" /></linearGradient></defs><rect width="71" height="72" rx="15" fill="url(#as)" /><g stroke="#fff" stroke-width="4.500" stroke-linecap="round"><path d="M41 12L21 54M30 12l20 42M12 43h47" /></g></svg>
      </div>
      <!-- settings -->
      <div class="di">
        <svg viewBox="0 0 71 72"><rect width="71" height="72" rx="15" fill="#c1c5c6" /><circle cx="35.500" cy="36" r="30" fill="#3a3a3a" /><circle cx="35.500" cy="36" r="26.500" fill="none" stroke="#c8c8c8" stroke-width="4" stroke-dasharray="2.500 2.500" /><circle cx="35.500" cy="36" r="21" fill="#555" stroke="#ddd" stroke-width="2" /><circle cx="35.500" cy="36" r="15" fill="none" stroke="#999" stroke-width="5" /><g stroke="#ddd" stroke-width="3.500"><path d="M35.500 36V15M35.500 36l18 10.500M35.500 36l-18 10.500" /></g><circle cx="35.500" cy="36" r="4" fill="#888" /></svg>
        <span class="badge">1</span>
      </div>
      <!-- excel -->
      <div class="di">
        <svg viewBox="0 0 71 72"><rect width="71" height="72" rx="15" fill="#fff" /><rect x="20" y="12" width="40" height="14" fill="#7cc592" /><rect x="20" y="26" width="40" height="12" fill="#4aa56b" /><rect x="20" y="38" width="40" height="12" fill="#39865a" /><rect x="20" y="50" width="40" height="12" fill="#2d6a49" /><rect x="9" y="24" width="24" height="24" rx="2" fill="#2f7b4c" /><text x="21" y="42" font-size="18" fill="#fff" text-anchor="middle" font-family="Inter, sans-serif">X</text></svg>
        <i class="dot"></i>
      </div>
      <i class="dsep" style="margin:0 8px 0 11px"></i>
      <!-- preview -->
      <div class="di">
        <svg viewBox="0 0 71 80" style="height:80px"><rect width="71" height="72" rx="15" fill="#f0f0f2" /><rect x="7" y="7" width="57" height="58" rx="6" fill="#a8bde6" /><rect x="7" y="35" width="57" height="10" fill="#2a4a75" /><rect x="7" y="45" width="57" height="20" fill="#7f7a70" /><path d="M30 40a12 6 0 0 1 24 0v10l9 22a6 6 0 0 1-6 7H36a6 6 0 0 1-6-7l4-22z" fill="#d5dadf" stroke="#555" /><rect x="31" y="28" width="26" height="18" rx="5" fill="#1d1d1f" /></svg>
      </div>
      <!-- tips -->
      <div class="di">
        <svg viewBox="0 0 71 72"><defs><linearGradient id="tp" x1="0" y1="0" x2="0" y2="1"><stop offset="0" stop-color="#f0ae48" /><stop offset="1" stop-color="#f7d468" /></linearGradient></defs><rect width="71" height="72" rx="15" fill="url(#tp)" /><path d="M35.500 8c11 0 17 9 15 21-1 7-8 13-9 27H30c-1-14-8-20-9-27-2-12 4-21 14.500-21z" fill="#fdfbf0" /><path d="M29 36h13M35.500 36v19" stroke="#d99537" stroke-width="2" /><rect x="29" y="56" width="13" height="9" rx="2" fill="#bbb" /></svg>
      </div>
      <!-- zoom -->
      <div class="di">
        <svg viewBox="0 0 71 72"><defs><linearGradient id="zm" x1="0" y1="0" x2="0" y2="1"><stop offset="0" stop-color="#3a74e6" /><stop offset="1" stop-color="#2c4fd0" /></linearGradient></defs><rect width="71" height="72" rx="15" fill="url(#zm)" /><text x="35.500" y="44" font-size="21" fill="#fff" text-anchor="middle" font-family="Inter, sans-serif" font-weight="600">zoom</text></svg>
      </div>
      <i class="dsep" style="margin:0 12px 0 9px"></i>
      <!-- trash -->
      <div class="di trash">
        <svg viewBox="0 0 66 88" width="66" height="88"><path d="M2 8c18-8 44-8 62 0l-8 74c-1 8-45 8-46 0z" fill="#dcdedc" /><path d="M2 8c8 12 54 12 62 0" fill="#6a6c6a" /><path d="M8 10l10-8 6 7 9-9 8 8 9-6 8 8-12 6H18z" fill="#eee" /><path d="M20 7l4 5M40 6l4 6" stroke="#3a70c0" stroke-width="2" /><path d="M28 6l3 7" stroke="#c04030" stroke-width="2" /></svg>
      </div>
    </div>
  </div>
</div>

<style>
  :global(body) {
    margin: 0;
    background: #1b201c;
  }

  .desktop {
    width: 2500px;
    height: 1562px;
    overflow: hidden;
    display: flex;
    flex-direction: column;
    font-family: Inter, 'Liberation Sans', sans-serif;
    background:
      repeating-linear-gradient(100deg, rgba(170, 180, 120, 0.06) 0 3px, transparent 3px 17px),
      linear-gradient(90deg, #3e4a2c 0, #26301f 8%, #3a3d2a 45%, #2d3027 70%, #151a1c 94%, #14181a 100%);
  }

  .menubar {
    height: 33px;
    flex: none;
    display: flex;
    align-items: center;
    gap: 31px;
    padding-left: 28px;
    color: #fff;
    font-size: 17.200px;
    background: linear-gradient(90deg, #4b4e43, #44463c 50%, #33362e);
  }
  .menubar b {
    margin-left: -6px;
    font-weight: 700;
  }
  .apple {
    width: 24px;
    height: 24px;
    margin-top: -3px;
  }
  .tray {
    margin-left: auto;
    display: flex;
    align-items: center;
    gap: 24px;
    padding-right: 24px;
  }
  .br {
    border: 1.500px solid #fff;
    border-radius: 5px;
    padding: 2px 3px;
    font-size: 15px;
  }
  .date {
    font-size: 18.300px;
    margin-left: 6px;
  }

  .window {
    height: 1408px;
    margin-top: 2px;
    flex: none;
    display: flex;
    flex-direction: column;
    background: #f6f6f6;
    border-radius: 16px;
    overflow: hidden;
  }

  .titlebar {
    height: 47px;
    flex: none;
    position: relative;
    display: flex;
    align-items: center;
    gap: 15px;
    padding-left: 18px;
    color: #333;
    font-size: 15px;
  }
  .light {
    width: 16px;
    height: 16px;
    border-radius: 50%;
    margin-right: -3px;
  }
  .red { background: #e0635a; }
  .yel { background: #ecc05a; }
  .grn { background: #74c365; }
  .autosave {
    margin-left: 24px;
    width: 178px;
    color: #444;
    white-space: nowrap;
    font-size: 16px;
  }
  .toggle {
    width: 40px;
    height: 20px;
    border-radius: 10px;
    background: linear-gradient(90deg, #888, #666);
    position: relative;
    margin-left: 13px;
  }
  .toggle i {
    position: absolute;
    left: 0;
    top: 0;
    width: 20px;
    height: 20px;
    border-radius: 50%;
    background: #fff;
    box-shadow: 0 0 0 1px #888;
  }
  .tb {
    flex: none;
  }
  .more {
    font-size: 10px;
    letter-spacing: 1px;
    color: #444;
    margin-left: 1px;
  }
  .doctitle {
    position: absolute;
    left: 945px;
    top: 9px;
    display: flex;
    align-items: center;
    gap: 7px;
    font-size: 17px;
    white-space: nowrap;
    color: #222;
  }
  .right-a {
    position: absolute;
    left: 2412px;
    top: 11px;
  }
  .right-b {
    position: absolute;
    left: 2456px;
    top: 10px;
  }

  .chev {
    display: inline-block;
    width: 6px;
    height: 6px;
    border-right: 1.600px solid #333;
    border-bottom: 1.600px solid #333;
    transform: rotate(45deg);
    margin-top: -3px;
    flex: none;
  }
  .chev.soft {
    border-color: #9a9a9a;
  }
  .chev.wh {
    border-color: #fff;
    margin-left: 10px;
  }

  .tabs {
    height: 40px;
    flex: none;
    display: flex;
    align-items: center;
    gap: 34.300px;
    padding-left: 16px;
    font-size: 18.300px;
    color: #222;
    position: relative;
  }
  .tabs > span.on {
    font-weight: 600;
    position: relative;
    color: #1d1d1d;
    letter-spacing: 0.150px;
  }
  .tabs > span.on::after {
    content: '';
    position: absolute;
    left: 0;
    right: 0;
    bottom: -7px;
    height: 4px;
    border-radius: 2px;
    background: #3b6e45;
  }
  .actions {
    margin-left: auto;
    display: flex;
    gap: 15px;
    padding-right: 14px;
  }
  .actions button {
    height: 33px;
    border-radius: 7px;
    display: flex;
    align-items: center;
    font-family: inherit;
    font-size: 17.500px;
    padding: 0;
    gap: 8px;
    white-space: nowrap;
  }
  .comments {
    width: 161px;
    justify-content: center;
    background: #fff;
    border: 1px solid #dadada;
    color: #222;
  }
  .share {
    width: 185px;
    justify-content: center;
    background: #447c4d;
    color: #fff;
    border: none;
  }

  .ribbon {
    height: 103px;
    flex: none;
    display: flex;
    padding-top: 5px;
    box-sizing: border-box;
    background: #f3f3f3;
    font-size: 14.400px;
    color: #222;
  }
  .grp {
    height: 86px;
    flex: none;
    box-sizing: border-box;
    border-right: 1px solid #cfcfcf;
    display: flex;
    position: relative;
  }
  .g1 { width: 203px; padding-left: 24px; }
  .g2 { width: 376px; padding-left: 14px; flex-direction: column; }
  .g3 { width: 226px; padding-left: 21px; flex-direction: column; }
  .g4 { width: 310px; flex-direction: column; }
  .g5 { width: 245px; flex-direction: column; }
  .g6 { width: 291px; }
  .g7 { width: 235px; }
  .g8 { width: 325px; padding-left: 14px; }
  .g9 { width: 289px; border-right: none; padding-left: 0; }

  .line {
    display: flex;
    align-items: center;
    height: 33px;
    margin-top: 7px;
    flex: none;
  }
  .line.low {
    margin-top: 12px;
    height: 34px;
  }
  .box {
    height: 33px;
    box-sizing: border-box;
    background: #fff;
    border: 1px solid #dedede;
    border-radius: 6px;
    display: flex;
    align-items: center;
    justify-content: flex-end;
    padding-right: 10px;
  }
  .gl {
    color: #a3a3a3;
    font-size: 23px;
    font-weight: 400;
    text-decoration-thickness: 1px;
  }
  b.gl {
    font-weight: 700;
  }
  .gl small {
    color: #7aa3d4;
    font-size: 16px;
    vertical-align: 6px;
  }
  .a1 { margin-left: 10px; }
  .a2 { margin-left: 14px; }
  .serif {
    font-family: 'Liberation Serif', serif;
  }
  .pct {
    font-size: 28px;
  }
  .vsep {
    width: 1px;
    height: 24px;
    background: #cfcfcf;
    display: block;
    flex: none;
  }
  .vsep.tall {
    height: 26px;
  }
  .dim {
    color: #8a8a8a;
    font-size: 14.400px;
    white-space: nowrap;
  }

  .big {
    display: flex;
    flex-direction: column;
    align-items: center;
    flex: none;
  }
  .big .ico {
    height: 55px;
    flex: none;
    display: flex;
    align-items: center;
    gap: 9px;
    padding-top: 2px;
    box-sizing: border-box;
  }
  .lbl {
    font-size: 14px;
    line-height: 17px;
    text-align: center;
    white-space: nowrap;
  }
  .grey {
    color: #7a7a7a;
  }
  .colar {
    width: 58px;
    align-items: flex-start;
  }
  .colar .lbl {
    margin-left: 6px;
  }
  .stack {
    display: flex;
    flex-direction: column;
    padding-top: 1px;
    margin-left: 6px;
  }
  .stack.w {
    width: 118px;
  }
  .it {
    height: 30.500px;
    flex: none;
    display: flex;
    align-items: center;
    gap: 9px;
    white-space: nowrap;
  }
  .it svg {
    flex: none;
  }

  .formula {
    height: 39px;
    flex: none;
    display: flex;
    align-items: center;
    box-sizing: border-box;
    border-top: 2px solid #d8d8d8;
    border-bottom: 2px solid #a8a8a8;
    background: #f3f3f3;
    font-size: 16px;
    color: #222;
    position: relative;
  }
  .namebox {
    width: 118px;
    height: 100%;
    display: flex;
    align-items: center;
    justify-content: space-between;
    background: #fff;
    border-right: 1px solid #d0d0d0;
    padding: 0 6px 0 14px;
    box-sizing: border-box;
  }
  .namebox em {
    font-style: normal;
    font-size: 9px;
    line-height: 13px;
    color: #555;
  }
  .fx {
    font-size: 22px;
    color: #c4c4c4;
    margin-left: 17px;
    width: 24px;
  }
  .fx.f {
    font-family: 'Liberation Serif', serif;
    font-style: italic;
    color: #222;
    margin-left: 14px;
  }
  .input {
    flex: 1;
    height: 28px;
    margin-left: 6px;
    padding-left: 9px;
    line-height: 28px;
    background: #fff;
    border-left: 1px solid #d6d6d6;
  }
  .expand {
    width: 28px;
    height: 28px;
    line-height: 28px;
    text-align: center;
    font-size: 11px;
    background: #fff;
    border: 1px solid #ddd;
    border-radius: 3px;
    color: #555;
    margin: 0 2px 0 2px;
  }

  .sheet {
    flex: 1;
    min-height: 0;
    overflow: hidden;
    background: #fff;
    font-family: Lato, 'Open Sans', sans-serif;
    color: #1c1c1c;
    font-size: 19.500px;
    letter-spacing: -0.300px;
  }
  .colhead {
    height: 44px;
    box-sizing: border-box;
    display: grid;
    grid-template-columns: 43px 13px 201px repeat(13, 152.100px) 14px 102px 168px;
    background: linear-gradient(#f5f5f5, #fbfbfb);
    border-bottom: 2px solid #ababab;
  }
  .corner {
    display: flex;
    align-items: flex-end;
    padding-left: 3px;
    border-right: 1px solid #ccc;
  }
  .ch {
    display: flex;
    align-items: center;
    justify-content: center;
    color: #333;
    border-right: 1px solid #dcdcdc;
    padding-top: 3px;
    box-sizing: border-box;
  }
  .ch.sel {
    background: #e8e8e8;
    border-bottom: 3px solid #2f6b3c;
    margin-bottom: -2px;
  }
  .sheetbody {
    display: flex;
    position: relative;
  }
  .rowheads {
    width: 43px;
    flex: none;
    background: linear-gradient(90deg, #f5f5f5, #fcfcfc);
    border-right: 1px solid #ccc;
    box-sizing: border-box;
  }
  .rh {
    box-sizing: border-box;
    display: flex;
    align-items: flex-end;
    justify-content: center;
    overflow: hidden;
    border-bottom: 1px solid #dadada;
    padding-bottom: 2px;
    line-height: 22px;
    color: #333;
  }
  .rh.sel {
    background: #e8e8e8;
    border-right: 2px solid #2f6b3c;
    color: #2f6b3c;
    margin-right: -1px;
  }
  .rh.short {
    align-items: flex-start;
    line-height: 10px;
    padding-bottom: 0;
  }

  .content {
    flex: 1;
    min-width: 0;
    display: flex;
    flex-direction: column;
  }
  .banner {
    height: 84px;
    margin-left: 13px;
    flex: none;
    display: grid;
    grid-template-columns: 174px 246px 224px 218px 206px 312px 160px 396px 76px 1fr;
    background: #5a9660;
    border-bottom: 1px solid #47804e;
    box-sizing: border-box;
    position: relative;
    color: #fff;
    font-weight: 700;
  }
  .logo {
    padding: 22px 0 0 1px;
    font-weight: 400;
    overflow: hidden;
    white-space: nowrap;
  }
  .logo-top {
    display: flex;
    align-items: flex-start;
    gap: 10px;
    height: 38px;
    margin-top: -1px;
  }
  .vizual {
    font-size: 35px;
    font-weight: 300;
    font-style: italic;
    line-height: 34px;
    letter-spacing: 0;
    margin-left: 2px;
  }
  .logo-sub {
    display: flex;
    align-items: center;
    font-size: 12.500px;
    letter-spacing: -0.500px;
    gap: 10px;
    margin-top: 1px;
  }
  .logo-sub i {
    width: 27px;
    height: 2px;
    background: #fff;
  }
  .nav {
    display: flex;
    flex-direction: column;
    align-items: center;
    justify-content: flex-end;
    white-space: nowrap;
    font-size: 19.500px;
  }
  .nav svg {
    margin-bottom: 2px;
    margin-left: calc(var(--dx) * 2);
  }
  .nav span {
    height: 35px;
    line-height: 41px;
    padding: 0 10.500px;
  }
  .nav.active span {
    background: #fff;
    color: #111;
  }
  .versao {
    position: absolute;
    right: 0;
    top: 2px;
    width: 100px;
    height: 33px;
    line-height: 33px;
    background: #a52f22;
    text-align: center;
    font-weight: 400;
    font-size: 17px;
    letter-spacing: 0;
  }
  .subtabs {
    height: 60px;
    margin-left: 13px;
    flex: none;
    display: flex;
    background: #f2f2f2;
    position: relative;
    font-weight: 700;
    color: #111;
    font-size: 19px;
  }
  .subtabs span {
    position: absolute;
    top: 33px;
    left: calc(var(--cx) - 56px);
    transform: translateX(-50%);
    white-space: nowrap;
  }
  .subtabs .on {
    left: 83px;
    top: 21px;
    transform: none;
    width: 92px;
    height: 39px;
    line-height: 41px;
    background: #fff;
    text-align: center;
  }

  .picker {
    margin-top: 29px;
    height: 72px;
    margin-left: 13px;
    flex: none;
    display: grid;
    grid-template-columns: 201px 153px 304px 304px;
    align-items: stretch;
    text-align: center;
  }
  .p-lbl,
  .p-val {
    display: flex;
    align-items: center;
    justify-content: center;
    box-sizing: border-box;
    position: relative;
  }
  .p-lbl {
    font-size: 21.500px;
  }
  .p-val {
    background: #f2f2f2;
    font-size: 20.500px;
  }
  .selected {
    border: 3px solid #2f6b3c;
    margin: -1px -1px 0 -2px;
  }
  .filial {
    border: 1px solid #d4d4d4;
    border-top-width: 2px;
    border-bottom-width: 2px;
  }
  .handle {
    position: absolute;
    right: -5px;
    bottom: -5px;
    width: 7px;
    height: 7px;
    background: #2f6b3c;
    border: 1px solid #fff;
  }
  .drop {
    position: absolute;
    left: 100%;
    bottom: 3px;
    width: 23px;
    height: 23px;
    line-height: 22px;
    background: #fff;
    border: 1px solid #aaa;
    font-size: 13px;
    color: #777;
    box-sizing: border-box;
    text-align: center;
    letter-spacing: 0;
  }

  .tables {
    display: flex;
    margin-top: 17px;
    margin-left: 13px;
    flex: none;
  }
  .main {
    width: 2178px;
    flex: none;
  }
  .grid {
    display: grid;
    grid-template-columns: 201px repeat(13, 152.100px);
    text-align: center;
  }
  .grid > div {
    display: flex;
    align-items: center;
    justify-content: center;
    box-sizing: border-box;
    white-space: nowrap;
  }
  .hdr {
    height: 80px;
    background: #a6a6a6;
    border-top: 2px solid #bdbdbd;
    box-sizing: border-box;
    color: #333;
    font-weight: 700;
  }
  .grid.hdr > div {
    border-right: 1px solid #d6d6d6;
  }
  .body {
    height: 60px;
    box-sizing: border-box;
    font-size: 20.300px;
  }
  .grid.body > div {
    border-right: 1px solid #d9d9d9;
    border-bottom: 2px solid #d9d9d9;
    padding-top: 2px;
  }
  .grid.body > .name {
    background: #f2f2f2;
    font-weight: 700;
    font-size: 22px;
    border-left: 1px solid #d9d9d9;
    padding: 0;
  }
  .grid.body > .total {
    background: #f2f2f2;
  }
  .grid.body > .bg-g,
  .grid.body > .name.bg-g {
    background: #5a9660;
    color: #fff;
  }
  .grid.body > .bg-r,
  .grid.body > .name.bg-r {
    background: #a52f22;
    color: #fff;
  }
  .grid.body > .name.bg-b {
    background: #3a64d8;
    color: #fff;
    line-height: 29px;
    white-space: normal;
    padding: 0 20px;
  }
  .note {
    height: 50px;
    margin-top: 50px;
    padding-left: 4px;
    display: flex;
    align-items: center;
    gap: 6px;
    white-space: nowrap;
    color: #111;
    font-size: 22px;
  }
  .note em {
    font-weight: 700;
    color: #7f7f7f;
    font-size: 22.800px;
  }
  .payables {
    border-top: 2px solid #d9d9d9;
    margin-top: -2px;
  }
  .cutoff {
    display: grid;
    grid-template-columns: 201px 152px;
    margin-top: 60px;
    height: 18px;
    width: 353px;
  }
  .cutoff div {
    height: 18px;
    overflow: hidden;
    box-sizing: border-box;
    border-top: 2px solid #cfcfcf;
    border-right: 2px solid #cfcfcf;
    border-left: 2px solid #cfcfcf;
    text-align: center;
    line-height: 46px;
    font-weight: 700;
    background: #f2f2f2;
  }
  .cutoff div + div {
    background: #fff;
    font-weight: 400;
    border-left: none;
  }
  .side {
    margin-left: 14px;
    width: 292px;
    flex: none;
  }
  .yr {
    display: grid;
    grid-template-columns: 102px 168px;
    text-align: center;
    box-sizing: border-box;
  }
  .yr > div {
    display: flex;
    align-items: center;
    justify-content: center;
    box-sizing: border-box;
  }
  .yr.hdr > div {
    border-right: 1px solid #d6d6d6;
  }
  .yr.body > div {
    background: #f2f2f2;
    border-bottom: 2px solid #d9d9d9;
    border-right: 1px solid #d9d9d9;
    padding-top: 2px;
  }
  .yr.body > .acc {
    justify-content: space-between;
    padding: 2px 14px 0 12px;
  }
  .dash {
    padding-right: 20px;
  }
  .freeze {
    position: absolute;
    left: 0;
    right: 0;
    top: 341px;
    height: 2px;
    background: #8c8c8c;
    display: block;
  }

  .sheettabs {
    height: 37px;
    flex: none;
    display: flex;
    align-items: center;
    box-sizing: border-box;
    border-top: 2px solid #d2d2d2;
    background: #f1f1f1;
    font-size: 17px;
    color: #444;
    position: relative;
    z-index: 1;
  }
  .arrow {
    width: 14px;
    font-size: 14px;
    color: #444;
    margin-left: 18px;
    transform: scaleX(0.700);
  }
  .arrow + .arrow {
    margin-left: 18px;
    margin-right: 21px;
  }
  .stab {
    height: 30px;
    margin-top: -5px;
    display: flex;
    align-items: center;
    gap: 9px;
    padding-left: 21px;
    box-sizing: border-box;
    border-right: 1px solid #d0d0d0;
    white-space: nowrap;
    flex: none;
  }
  .stab.on {
    height: 35px;
    background: #fff;
    color: #3f7d4b;
    font-weight: 500;
    box-shadow: 0 1px 2px rgba(0, 0, 0, 0.300);
    border-radius: 0 0 4px 4px;
    border-right: none;
  }
  .lock {
    width: 13px;
    height: 20px;
    flex: none;
  }
  .plus {
    margin-left: 30px;
    width: 53px;
    text-align: center;
    font-size: 26px;
    font-weight: 600;
    line-height: 30px;
    margin-top: -5px;
    border-left: 1px solid #d0d0d0;
    border-right: 1px solid #d0d0d0;
    color: #444;
  }

  .status {
    flex: none;
    height: 38px;
    display: flex;
    align-items: center;
    padding-left: 34px;
    border-top: 2px solid #cfcfcf;
    background: linear-gradient(#f3f3f3, #dedede);
    font-size: 16.500px;
    color: #555;
    box-sizing: border-box;
  }
  .zoomctl {
    margin-left: auto;
    display: flex;
    align-items: center;
    padding-right: 34px;
  }
  .view {
    width: 43px;
    height: 32px;
    border-radius: 5px;
    background: #a9a9a9;
    display: flex;
    align-items: center;
    justify-content: center;
  }
  .pm {
    font-size: 22px;
    color: #444;
    width: 14px;
    text-align: center;
  }
  .slider {
    width: 140px;
    height: 6px;
    margin: 0 7px 0 8px;
    border-radius: 3px;
    background: #a6a6a6;
    position: relative;
  }
  .slider i {
    position: absolute;
    left: 70px;
    top: -11px;
    width: 17px;
    height: 27px;
    border-radius: 9px;
    background: #f5f5f5;
    box-shadow: 0 0 2px rgba(0, 0, 0, 0.500);
  }
  .pct-z {
    margin-left: 23px;
    color: #555;
  }

  .dockrow {
    flex: none;
    display: flex;
    justify-content: center;
    margin-top: 2px;
  }
  .dock {
    width: 2177px;
    height: 110px;
    box-sizing: border-box;
    display: flex;
    align-items: flex-start;
    gap: 24px;
    padding: 15px 0 0 12px;
    border: 1px solid rgba(225, 230, 215, 0.650);
    border-radius: 28px;
    background: linear-gradient(90deg, #757d65 0, #657168 20%, #727b69 36%, #7c7867 50%, #6e6a62 62%, #7b7a6c 75%, #6f7a70 86%, #8a8474 95%, #70716a 100%);
  }
  .di {
    width: 71px;
    height: 72px;
    flex: none;
    position: relative;
  }
  .di.wide {
    width: 73px;
    margin-right: -2px;
  }
  .di svg {
    display: block;
    width: 100%;
    height: 100%;
    overflow: visible;
  }
  .di.trash {
    width: 66px;
    margin-top: -11px;
    height: 88px;
  }
  .dot {
    position: absolute;
    left: 33px;
    top: 88px;
    width: 5px;
    height: 5px;
    border-radius: 50%;
    background: #111;
  }
  .badge {
    position: absolute;
    right: -9px;
    top: -9px;
    width: 32px;
    height: 32px;
    line-height: 32px;
    border-radius: 50%;
    background: #cf5340;
    color: #fff;
    text-align: center;
    font-size: 17px;
  }
  .dsep {
    width: 1px;
    height: 82px;
    margin-top: -1px;
    flex: none;
    background: #3e3e38;
    display: block;
  }
</style>
